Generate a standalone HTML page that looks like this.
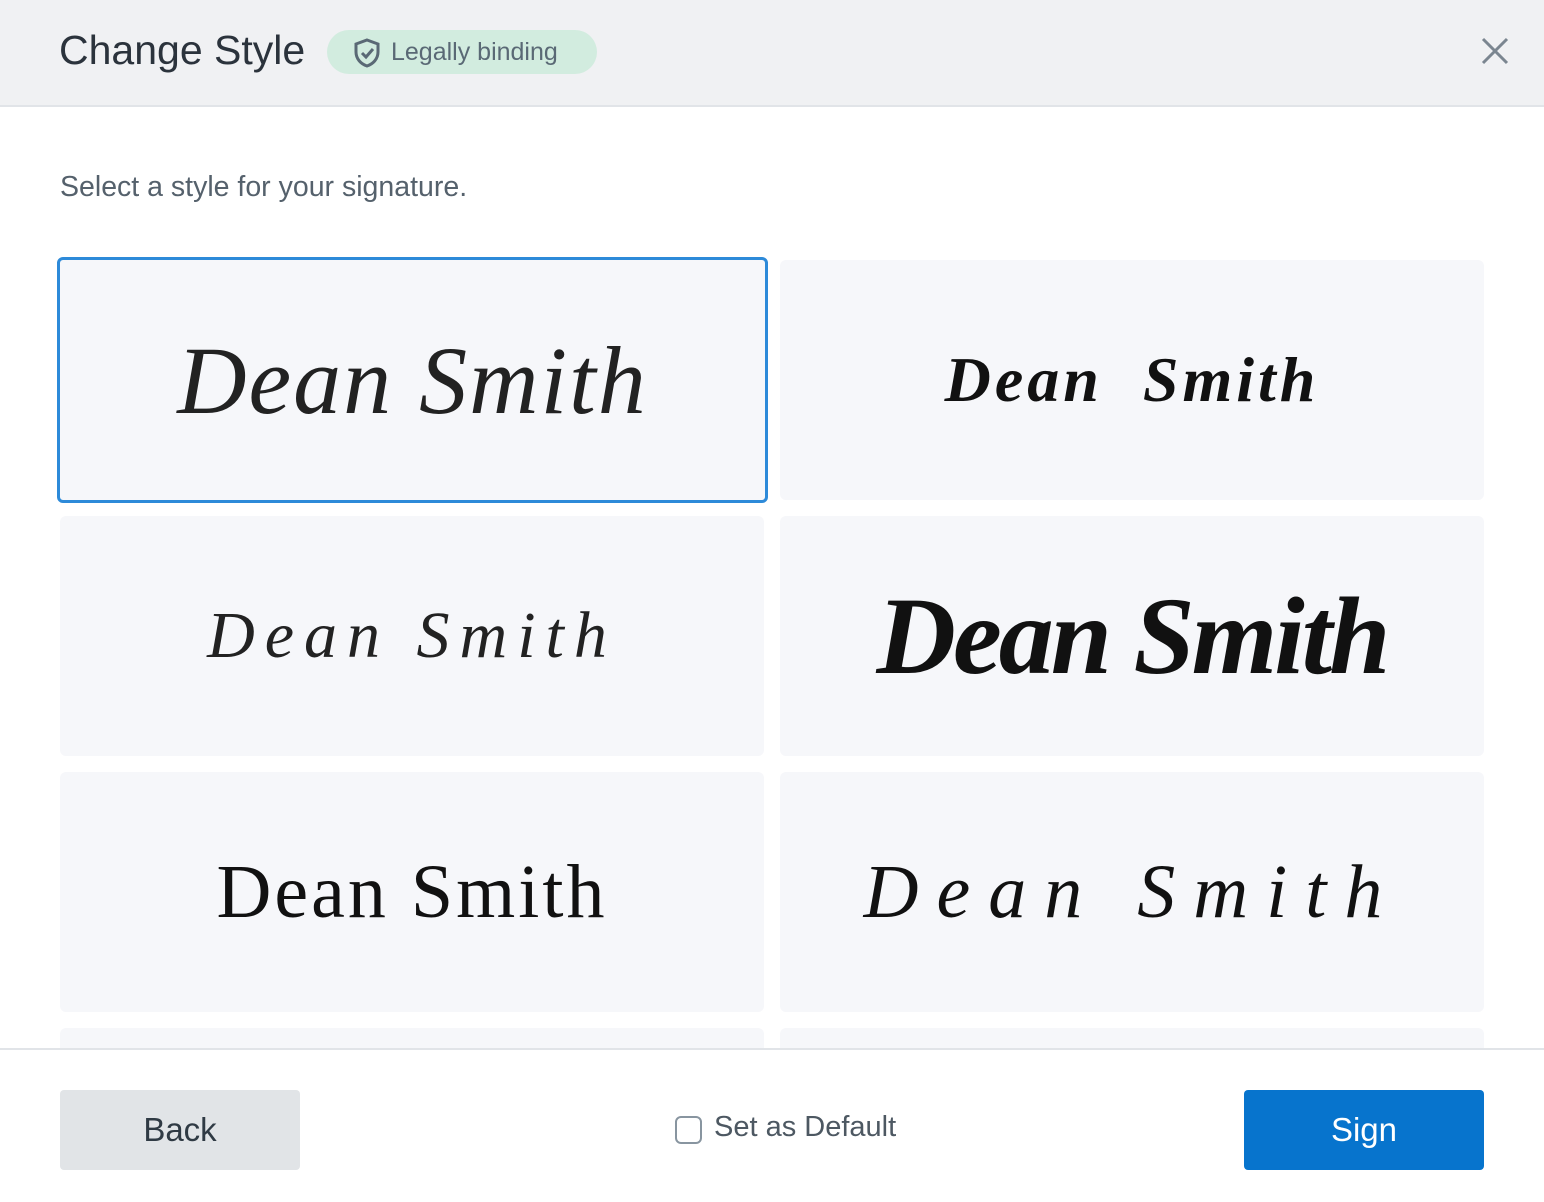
<!DOCTYPE html>
<html><head><meta charset="utf-8"><style>
*{box-sizing:border-box;margin:0;padding:0}
html,body{width:1544px;height:1202px;overflow:hidden}
body{background:#fff;font-family:"Liberation Sans",sans-serif;position:relative}
.hdr{position:absolute;left:0;top:0;width:1544px;height:107px;background:#f0f1f3;border-bottom:2px solid #e1e4e8}
.title{position:absolute;left:59px;top:27px;font-size:41px;color:#2b333c}
.badge{position:absolute;left:327px;top:30px;width:270px;height:44px;border-radius:22px;background:#d2ecdf;color:#5a6975;font-size:25px;line-height:44px;padding-left:64px}
.badge svg{position:absolute;left:26px;top:8px}
.close{position:absolute;left:1480px;top:36px}
.sub{position:absolute;left:60px;top:171px;font-size:28.5px;color:#55616c}
.card{position:absolute;width:704px;height:240px;background:#f6f7fa;border-radius:6px;display:flex;align-items:center;justify-content:center;font-family:"Liberation Serif",serif;font-style:italic;color:#111;white-space:nowrap;overflow:hidden}
.sel{border:3px solid #2d8ad9;left:57px!important;top:257px!important;width:711px!important;height:246px!important}
.foot{position:absolute;left:0;top:1048px;width:1544px;height:154px;background:#fff;border-top:2px solid #e1e4e8;z-index:2}
.back,.sign,.chk,.def{z-index:3}
.back{position:absolute;left:60px;top:1090px;width:240px;height:80px;background:#e1e4e7;border-radius:4px;font-size:33px;color:#2f3a44;text-align:center;line-height:80px}
.sign{position:absolute;left:1244px;top:1090px;width:240px;height:80px;background:#0774cd;border-radius:4px;font-size:33px;color:#fff;text-align:center;line-height:80px}
.chk{position:absolute;left:675px;top:1116px;width:27px;height:28px;border:2px solid #8895a0;border-radius:6px}
.def{position:absolute;left:714px;top:1111px;font-size:29px;color:#4d5862}
</style></head><body>
<div class="hdr">
<div class="title">Change Style</div>
<div class="badge"><svg width="28" height="30" viewBox="0 0 28 30"><path d="M14 2 L25 6 V14 C25 21 20 26 14 28 C8 26 3 21 3 14 V6 Z" fill="none" stroke="#5a6975" stroke-width="3"/><path d="M9 15 L13 19 L20 11" fill="none" stroke="#5a6975" stroke-width="3"/></svg>Legally binding</div>
<svg class="close" width="30" height="30" viewBox="0 0 30 30"><path d="M3 3 L27 27 M27 3 L3 27" stroke="#7b8690" stroke-width="3"/></svg>
</div>
<div class="sub">Select a style for your signature.</div>
<div class="card sel" style="font-size:96px;letter-spacing:2px;-webkit-text-stroke:0;color:#222">Dean Smith</div>
<div class="card" style="left:780px;top:260px;font-size:64px;font-weight:bold;letter-spacing:4px">Dean&nbsp;&nbsp;Smith</div>
<div class="card" style="left:60px;top:516px;font-size:66px;letter-spacing:10px;color:#222">Dean Smith</div>
<div class="card" style="left:780px;top:516px;font-size:110px;font-weight:bold;letter-spacing:-3px">Dean Smith</div>
<div class="card" style="left:60px;top:772px;font-size:76px;font-style:normal;letter-spacing:3px">Dean Smith</div>
<div class="card" style="left:780px;top:772px;font-size:76px;letter-spacing:18px">Dean Smith</div>
<div class="card" style="left:60px;top:1028px;height:20px;border-radius:6px 6px 0 0"></div>
<div class="card" style="left:780px;top:1028px;height:20px;border-radius:6px 6px 0 0"></div>
<div class="foot"></div>
<div class="back">Back</div>
<div class="chk"></div>
<div class="def">Set as Default</div>
<div class="sign">Sign</div>
</body></html>
